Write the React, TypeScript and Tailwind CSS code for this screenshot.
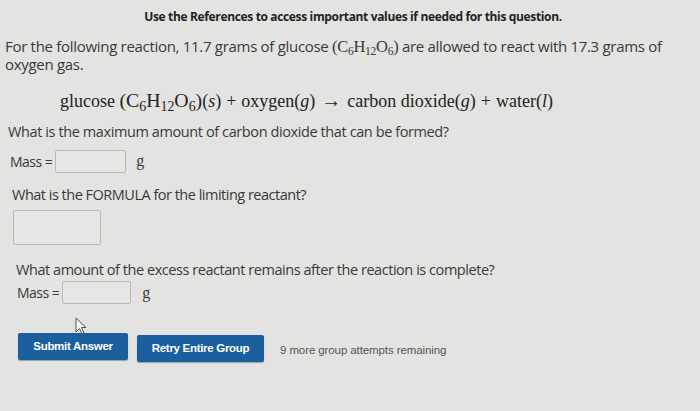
import React from "react";

const sans = { fontFamily: '"Open Sans", "Noto Sans", sans-serif' };
const serif = { fontFamily: '"Liberation Serif", "DejaVu Serif", serif' };
const arial = { fontFamily: '"Liberation Sans", Arial, sans-serif' };

function Sub({ children }: { children: React.ReactNode }) {
    return <span className="relative top-[0.3em] text-[0.7em] leading-none">{children}</span>;
}

function Formula() {
    return (
        <span style={serif} className="text-[1.1em] leading-none">
            (C<Sub>6</Sub>H<Sub>12</Sub>O<Sub>6</Sub>)
        </span>
    );
}

function AnswerBox({ className }: { className: string }) {
    return <input type="text" className={`border border-[#b9b9b6] bg-[#e6e6e4] rounded-[2px] ${className}`} />;
}

function Cursor() {
    return (
        <svg width="14" height="20" viewBox="0 0 14 20" className="absolute left-[57px] top-[-16px]">
            <path d="M1 1 L1 15 L4.5 11.5 L7 17 L9 16 L6.5 10.5 L11 10.5 Z" fill="#f4f4f4" stroke="#555" strokeWidth="1" />
        </svg>
    );
}

export default function App() {
    return (
        <div className="w-[700px] h-[411px] bg-[#e3e3e1] text-[#3a3a3a] overflow-hidden" style={sans}>
            <div className="pt-[8px] text-center text-[12px] font-bold tracking-[-0.35px] text-[#222] pl-[6px]">
                Use the References to access important values if needed for this question.
            </div>

            <p className="mt-[12px] ml-[5px] text-[15px] leading-[17px] tracking-[-0.3px] w-[690px]">
                For the following reaction, 11.7 grams of glucose <Formula /> are allowed to react with 17.3 grams of
                <br />
                oxygen gas.
            </p>

            <div className="mt-[16px] ml-[60px] text-[18px] leading-[22px] text-[#222]" style={serif}>
                glucose <Formula />(<i>s</i>)<span className="mx-[5px]">+</span>oxygen(<i>g</i>)
                <span className="mx-[6px] text-[20px]">→</span>carbon dioxide(<i>g</i>)<span className="mx-[5px]">+</span>water(<i>l</i>)
            </div>

            <p className="mt-[9px] ml-[8px] text-[14.5px] tracking-[-0.4px]">
                What is the maximum amount of carbon dioxide that can be formed?
            </p>

            <div className="mt-[7px] ml-[10px] flex items-center text-[14px] tracking-[-0.5px]">
                <span>Mass =</span>
                <AnswerBox className="ml-[3px] w-[71px] h-[23px]" />
                <span className="ml-[10px] text-[16px]" style={serif}>g</span>
            </div>

            <p className="mt-[11px] ml-[12px] text-[14.5px] tracking-[-0.5px]">
                What is the FORMULA for the limiting reactant?
            </p>

            <AnswerBox className="block mt-[4px] ml-[13px] w-[88px] h-[35px]" />

            <p className="mt-[14px] ml-[16px] text-[14.5px] tracking-[-0.45px]">
                What amount of the excess reactant remains after the reaction is complete?
            </p>

            <div className="mt-[0px] ml-[17px] flex items-center text-[14px] tracking-[-0.5px]">
                <span>Mass =</span>
                <AnswerBox className="ml-[3px] w-[69px] h-[23px]" />
                <span className="ml-[11px] text-[16px]" style={serif}>g</span>
            </div>

            <div className="relative mt-[28px] ml-[18px] flex items-start gap-[9px]" style={arial}>
                <Cursor />
                <button className="w-[110px] h-[27px] bg-[#1b5f9f] text-white text-[11.5px] font-bold rounded-[2px] shadow-[0_1px_1px_rgba(0,0,0,0.3)] tracking-[-0.3px]">
                    Submit Answer
                </button>
                <button className="mt-[2px] w-[127px] h-[27px] bg-[#1b5f9f] text-white text-[11.5px] font-bold rounded-[2px] shadow-[0_1px_1px_rgba(0,0,0,0.3)] tracking-[-0.3px]">
                    Retry Entire Group
                </button>
                <span className="ml-[7px] mt-[9px] text-[11.5px] text-[#555] tracking-[-0.1px]">
                    9 more group attempts remaining
                </span>
            </div>
        </div>
    );
}
